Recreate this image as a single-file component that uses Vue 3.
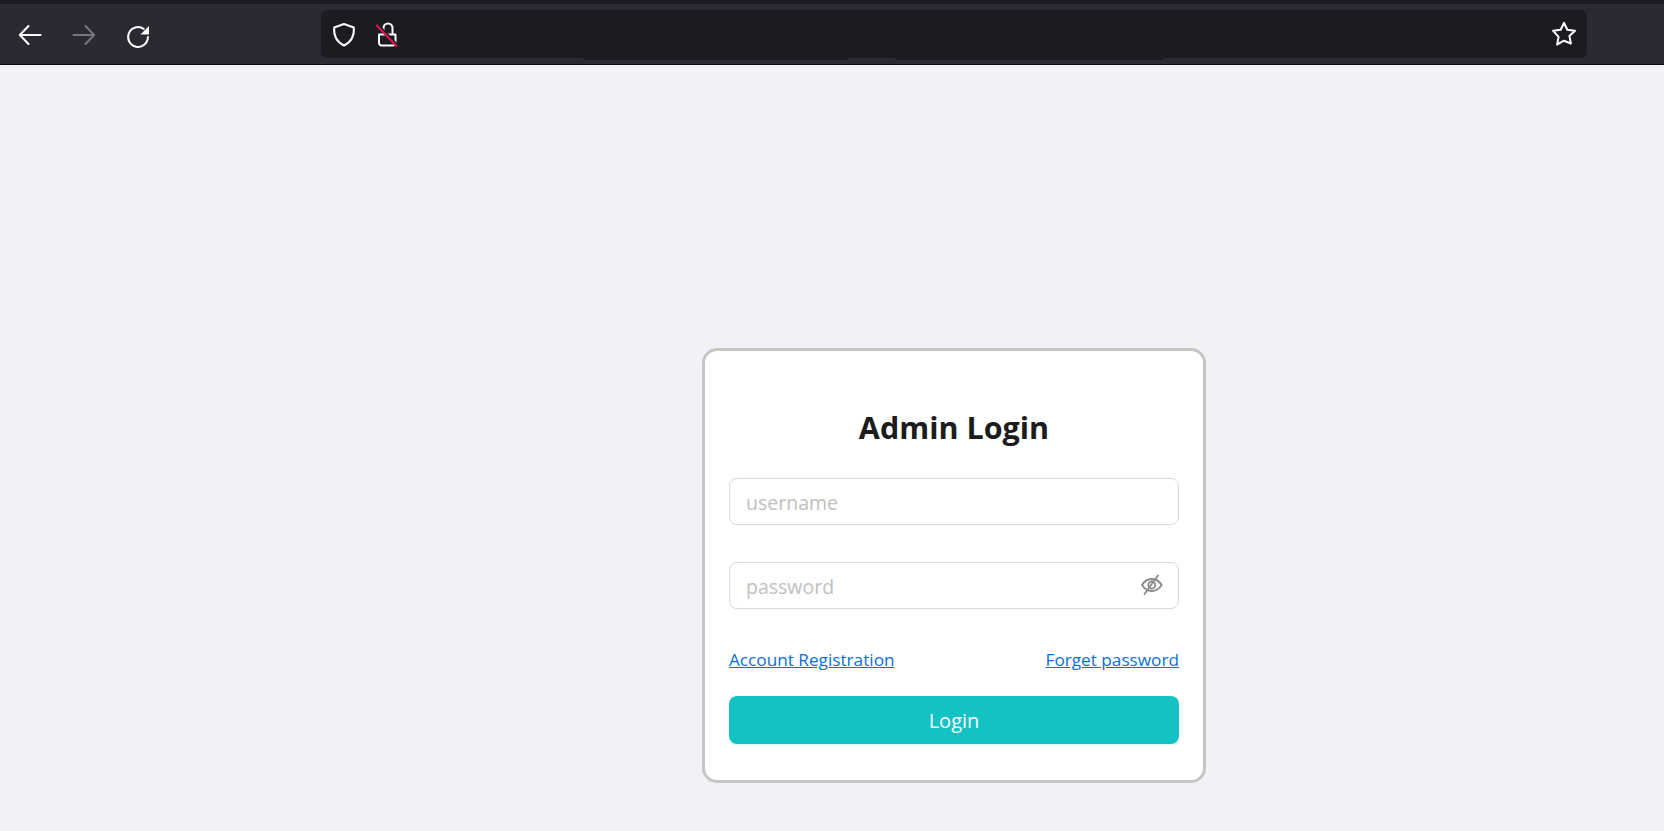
<template>
  <div class="browser">
    <div class="top-strip"></div>
    <header class="toolbar">
      <nav class="nav-btns">
        <svg class="icon" viewBox="0 0 24 24" width="24" height="24"><path d="M22.500 12H1.800M10.500 3 1.800 12l8.700 9" /></svg>
        <svg class="icon dim" viewBox="0 0 24 24" width="24" height="24"><path d="M1.500 12h20.700M13.500 3l8.700 9-8.700 9" /></svg>
        <svg class="icon" viewBox="0 0 24 24" width="24" height="24">
          <path d="M21.900 14a9.900 9.900 0 1 1-4.200-8.100" />
          <path class="solid" d="M23 3v8.500h-8.500z" />
        </svg>
      </nav>
      <div class="urlbar">
        <div class="url-left">
          <svg class="icon" viewBox="0 0 24 24" width="24" height="24"><path d="M11 2 20.800 5.500C21.500 13.500 18 20 11 23.500 4 20 .5 13.500 1.200 5.500z" /></svg>
          <svg class="icon" viewBox="0 0 24 24" width="24" height="24">
            <path d="M7.500 12V6a4.500 4.500 0 0 1 9 0v6M3 12.500h16.500v8a3 3 0 0 1-3 3H5.500a2.500 2.500 0 0 1-2.500-2.500z" />
            <path class="slash-gap" d="M1 2.500 21 23.500" />
            <path class="slash" d="M.8 3.500 20.500 24" />
          </svg>
        </div>
        <svg class="icon star" viewBox="0 0 24 24" width="24" height="24"><path d="M12 .8l3.300 6.900 7.700 1-5.600 5.200 1.500 7.600L12 18.700l-6.900 3.800 1.500-7.600L1 8.700l7.700-1z" /></svg>
        <span class="lip lip-a"></span>
        <span class="lip lip-b"></span>
      </div>
    </header>

    <main class="page">
      <form class="login-card" @submit.prevent>
        <h1>Admin Login</h1>
        <div class="field">
          <input type="text" placeholder="username" v-model="username">
        </div>
        <div class="field">
          <input type="password" placeholder="password" v-model="password">
          <svg class="eye" viewBox="0 0 22 22" width="22" height="22">
            <path d="M1 11C3.500 7 7 5 10.800 5s7.300 2 9.800 6c-2.500 4-6 6-9.800 6S3.500 15 1 11z" />
            <circle cx="10.800" cy="11" r="3.500" />
            <path d="M17 1.500 3.500 20" />
          </svg>
        </div>
        <div class="links">
          <a href="#">Account Registration</a>
          <a href="#">Forget password</a>
        </div>
        <button type="submit">Login</button>
      </form>
    </main>
  </div>
</template>

<script setup>
import { ref } from 'vue';

const username = ref('');
const password = ref('');
</script>

<style>
html, body {
  margin: 0;
  height: 100%;
  overflow: hidden;
}
</style>

<style scoped>
.browser {
  height: 831px;
  display: flex;
  flex-direction: column;
  background-color: #f0f2f6;
  font-family: "Open Sans", "Noto Sans", sans-serif;
}

.top-strip {
  height: 4px;
  background-color: #1c1b22;
}

.toolbar {
  height: 61px;
  box-sizing: border-box;
  display: flex;
  align-items: flex-start;
  padding: 6px 77px 0 18px;
  background-color: #2b2a33;
  border-bottom: 1px solid #0c0c0d;
}

.nav-btns {
  width: 303px;
  height: 50px;
  display: flex;
  align-items: center;
  gap: 30px;
}

.icon {
  fill: none;
  stroke: #fbfbfe;
  stroke-width: 2;
  stroke-linejoin: round;
  stroke-linecap: round;
  flex-shrink: 0;
  overflow: visible;
}

.dim {
  stroke: #77767d;
}

.solid {
  fill: #fbfbfe;
  stroke: none;
}

.slash {
  stroke: #e6134a;
}

.slash-gap {
  stroke: #1c1b22;
  stroke-width: 3.500;
}

.urlbar {
  position: relative;
  flex: 1;
  height: 48px;
  box-sizing: border-box;
  display: flex;
  align-items: center;
  justify-content: space-between;
  padding: 0 11px 0 12px;
  border-radius: 6px;
  background-color: #1c1b22;
}

.url-left {
  display: flex;
  align-items: center;
  gap: 19px;
}

.lip {
  position: absolute;
  top: 100%;
  height: 2px;
  background-color: #1c1b22;
}

.lip-a {
  left: 262px;
  width: 265px;
}

.lip-b {
  left: 574px;
  width: 267px;
}

.page {
  flex: 1;
  padding: 283px 0 0 702px;
}

.login-card {
  width: 504px;
  height: 435px;
  box-sizing: border-box;
  display: flex;
  flex-direction: column;
  padding: 0 24px;
  background-color: #fff;
  border: 3px solid #c8c4c4;
  border-radius: 15px;
}

h1 {
  margin: 0 0 45px;
  padding-top: 55px;
  height: 82px;
  box-sizing: border-box;
  line-height: 43px;
  text-align: center;
  font-size: 30.500px;
  font-weight: 700;
  color: #1c1c1c;
}

.field {
  position: relative;
  height: 47px;
  margin-bottom: 37px;
}

input {
  width: 100%;
  height: 100%;
  box-sizing: border-box;
  padding: 1px 16px 0;
  border: 1px solid #d9d9d9;
  border-radius: 8px;
  outline: none;
  background-color: #fff;
  font-family: inherit;
  font-size: 19.500px;
  color: #333;
}

input::placeholder {
  color: #c0c0c0;
}

.eye {
  position: absolute;
  right: 16px;
  top: 12px;
  fill: none;
  stroke: #8a8a8a;
  stroke-width: 1.800;
  stroke-linecap: round;
}

.links {
  display: flex;
  justify-content: space-between;
  margin-top: 1px;
  margin-bottom: 23px;
  line-height: 26px;
}

a {
  font-size: 17.200px;
  color: #0a6fe0;
  text-decoration: underline;
}

button {
  width: 100%;
  height: 48px;
  flex-shrink: 0;
  border: none;
  border-radius: 8px;
  background-color: #13c2c2;
  box-shadow: 0 2px 0 rgba(5, 255, 255, 0.1);
  color: #fff;
  font-family: inherit;
  font-size: 20px;
}
</style>
